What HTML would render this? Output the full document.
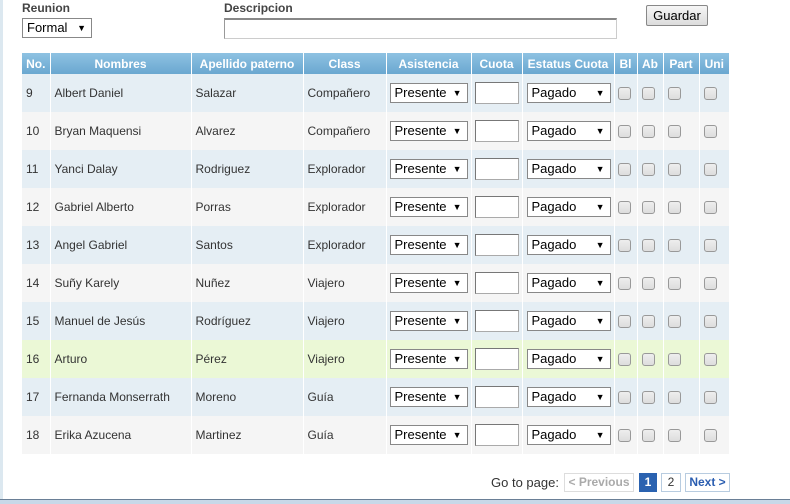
<!DOCTYPE html>
<html><head><style>
body{margin:0;width:790px;height:503px;background:#fff;font-family:"Liberation Sans",Arial,sans-serif;position:relative;overflow:hidden}
.lb{position:absolute;left:0;top:0;width:3px;height:503px;background:#dce8f0}
.lbl{position:absolute;font-size:12px;font-weight:bold;color:#444}
.sel{position:absolute;box-sizing:border-box;border:1px solid #888;background:#fff;font-size:13px;color:#000;padding:1px 4px;height:20px;line-height:16px}
.sel b{position:absolute;right:5px;top:1px;font-size:9px;font-weight:normal}
table{position:absolute;left:22px;top:53px;border-collapse:collapse;font-size:12px;color:#333;table-layout:fixed;width:707px}
th{background:linear-gradient(#8ec2e2,#6aa7d0);color:#fff;height:21px;padding:0;border-left:1px solid #fff;font-size:12px;overflow:hidden;white-space:nowrap}
td{height:38px;padding:0 0 0 4px;border-left:1px solid #fff;overflow:hidden;white-space:nowrap}
tr.o td{background:#e5eef4}tr.e td{background:#f5f5f5}tr.g td{background:#ebf8d6}
.s{display:inline-block;position:relative;box-sizing:border-box;border:1px solid #888;background:#fff;font-size:13px;color:#000;height:20px;line-height:17px;padding-left:4px;vertical-align:middle}
.s b{position:absolute;right:5px;top:1px;font-size:9px;font-weight:normal}
.in{display:inline-block;box-sizing:border-box;width:44px;height:22px;border:1px solid #aaa;border-top-color:#777;border-left-color:#777;background:#fff;vertical-align:middle}
.cb{display:inline-block;width:11px;height:11px;border:1px solid #999;border-radius:3px;background:linear-gradient(#eee,#ddd);vertical-align:middle}
.pg{position:absolute;top:473px;height:19px;box-sizing:border-box;border:1px solid #b8cce0;font-size:12px;font-weight:bold;text-align:center;line-height:17px;color:#2a5db0}
</style></head><body>
<div class="lb"></div>
<div class="lbl" style="left:22px;top:1px">Reunion</div>
<div class="sel" style="left:22px;top:18px;width:70px">Formal<b>▼</b></div>
<div class="lbl" style="left:224px;top:1px">Descripcion</div>
<div style="position:absolute;left:224px;top:18px;width:393px;height:21px;box-sizing:border-box;border:1px solid #ccc;border-top:2px solid #888;border-left:1px solid #999"></div>
<div style="position:absolute;left:646px;top:5px;width:62px;height:21px;box-sizing:border-box;border:1px solid #888;border-radius:2px;background:linear-gradient(#f6f6f6,#dcdcdc);font-size:13px;text-align:center;line-height:19px">Guardar</div>
<table>
<colgroup><col style="width:28px"><col style="width:141px"><col style="width:112px"><col style="width:83px"><col style="width:85px"><col style="width:51px"><col style="width:92px"><col style="width:23px"><col style="width:26px"><col style="width:36px"><col style="width:30px"></colgroup>
<tr><th style="border-left:0">No.</th><th>Nombres</th><th>Apellido paterno</th><th>Class</th><th>Asistencia</th><th>Cuota</th><th>Estatus Cuota</th><th>Bl</th><th>Ab</th><th>Part</th><th>Uni</th></tr>
<tbody id="tb"></tbody>
</table>
<div style="position:absolute;left:491px;top:475px;font-size:13px;color:#333">Go to page:</div>
<div class="pg" style="left:564px;width:70px;color:#aaa;border-color:#ddd">&lt; Previous</div>
<div class="pg" style="left:639px;width:18px;background:#2a62b0;color:#fff;border-color:#2a62b0">1</div>
<div class="pg" style="left:661px;width:20px;font-weight:normal;color:#333">2</div>
<div class="pg" style="left:685px;width:45px">Next &gt;</div>
<div style="position:absolute;left:0;top:499px;width:790px;height:4px;background:#c8d8e8;border-top:1px solid #6a7f96"></div>
<script>
var r=[[9,"Albert Daniel","Salazar","Compañero"],[10,"Bryan Maquensi","Alvarez","Compañero"],[11,"Yanci Dalay","Rodriguez","Explorador"],[12,"Gabriel Alberto","Porras","Explorador"],[13,"Angel Gabriel","Santos","Explorador"],[14,"Suñy Karely","Nuñez","Viajero"],[15,"Manuel de Jesús","Rodríguez","Viajero"],[16,"Arturo","Pérez","Viajero"],[17,"Fernanda Monserrath","Moreno","Guía"],[18,"Erika Azucena","Martinez","Guía"]];
var h="";r.forEach(function(x,i){var c=i==7?"g":(i%2?"e":"o");
h+='<tr class="'+c+'"><td style="border-left:0">'+x[0]+'</td><td>'+x[1]+'</td><td>'+x[2]+'</td><td>'+x[3]+'</td><td style="padding-left:3px"><span class="s" style="width:78px">Presente<b>▼</b></span></td><td style="padding-left:3px"><span class="in"></span></td><td style="padding-left:4px"><span class="s" style="width:84px">Pagado<b>▼</b></span></td><td style="padding-left:3px"><span class="cb"></span></td><td style="padding-left:4px"><span class="cb"></span></td><td style="padding-left:4px"><span class="cb"></span></td><td style="padding-left:4px"><span class="cb"></span></td></tr>';});
document.getElementById("tb").innerHTML=h;
</script>
</body></html>
